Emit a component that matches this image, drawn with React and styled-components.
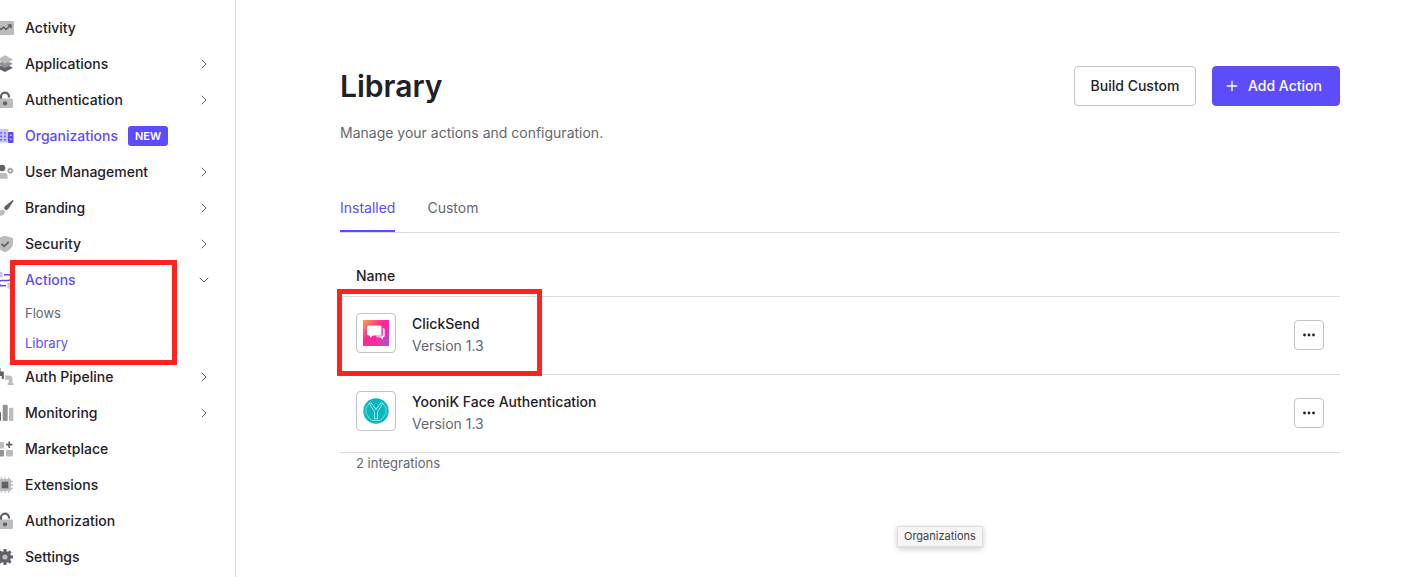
import React from "react";
import styled, { createGlobalStyle, css } from "styled-components";
import { ChevronRight, ChevronDown, Plus } from "lucide-react";

const c = {
  ink: "#1e212a",
  muted: "#65676e",
  brand: "#5c4cfa",
  brandLight: "#c8c2fd",
  line: "#dcdcdd",
  edge: "#c4c4c8",
  dark: "#5f6068",
  mid: "#8f9596",
  light: "#bcbcbd",
  mark: "#ff231f",
};

const GlobalStyle = createGlobalStyle`
  *, *::before, *::after { box-sizing: border-box; }
  body {
    margin: 0;
    background: #fff;
    color: ${c.ink};
    font-family: Inter, "Liberation Sans", sans-serif;
    font-size: 14px;
    line-height: 22px;
  }
  button { font: inherit; color: inherit; cursor: pointer; }
  a { color: inherit; text-decoration: none; }
`;

const Page = styled.div`
  position: relative;
  display: flex;
  min-height: 100vh;
`;

const Sidebar = styled.nav`
  flex: 0 0 236px;
  padding-top: 10px;
  border-right: 1px solid ${c.line};
`;

const NavList = styled.ul`
  list-style: none;
  margin: 0;
  padding: 0;
`;

const NavItem = styled.li`
  position: relative;
`;

const NavLink = styled.a`
  display: flex;
  align-items: center;
  height: 36px;
  padding-right: 23px;
  font-weight: 500;
  color: ${(p) => (p.$active ? c.brand : c.ink)};
`;

const NavIcon = styled.svg`
  flex: none;
  width: 15px;
  height: 20px;
  margin-right: 10px;
`;

const Chevron = styled.span`
  display: flex;
  margin-left: auto;
  color: ${c.dark};
`;

const Badge = styled.span`
  margin-left: 10px;
  padding: 0 7px;
  border-radius: 3px;
  background: ${c.brand};
  color: #fff;
  font-size: 11px;
  font-weight: 600;
  line-height: 20px;
`;

const SubList = styled(NavList)`
  padding-bottom: 1px;
`;

const SubLink = styled.a`
  display: block;
  padding-left: 25px;
  font-size: 13px;
  line-height: 30px;
  color: ${(p) => (p.$active ? c.brand : c.muted)};
`;

const markBase = css`
  position: absolute;
  border: 5px solid ${c.mark};
  pointer-events: none;
`;

const MenuMark = styled.span`
  ${markBase}
  left: 10px;
  top: -2px;
  width: 167px;
  height: 105px;
`;

const RowMark = styled.span`
  ${markBase}
  left: -3px;
  top: -8px;
  width: 205px;
  height: 87px;
`;

const Main = styled.main`
  flex: 1;
  min-width: 0;
  padding: 66px 62px 0 104px;
`;

const Header = styled.header`
  display: flex;
  align-items: center;
  gap: 16px;
`;

const Title = styled.h1`
  flex: 1;
  margin: 0;
  font-size: 30px;
  font-weight: 600;
  line-height: 40px;
`;

const Button = styled.button`
  display: flex;
  align-items: center;
  justify-content: ${(p) => (p.$primary ? "flex-start" : "center")};
  gap: 8px;
  height: 40px;
  min-width: ${(p) => (p.$primary ? "128px" : "122px")};
  padding: 0 11px;
  border: 1px solid ${(p) => (p.$primary ? c.brand : c.edge)};
  border-radius: 4px;
  background: ${(p) => (p.$primary ? c.brand : "#fff")};
  color: ${(p) => (p.$primary ? "#fff" : c.ink)};
  font-weight: 500;
`;

const Lead = styled.p`
  margin: 16px 0 0;
  color: ${c.muted};
`;

const Tabs = styled.div`
  display: flex;
  gap: 32px;
  margin-top: 53px;
  border-bottom: 1px solid ${c.line};
`;

const Tab = styled.button`
  padding: 0 0 11px;
  border: 0;
  border-bottom: 2px solid ${(p) => (p.$active ? c.brand : "transparent")};
  background: none;
  color: ${(p) => (p.$active ? c.brand : c.muted)};
`;

const Table = styled.table`
  width: 100%;
  margin-top: 22px;
  border-collapse: separate;
  border-spacing: 0;
`;

const HeadCell = styled.th`
  height: 42px;
  padding: 0 16px;
  border-bottom: 1px solid ${c.line};
  font-weight: 500;
  text-align: left;
`;

const Cell = styled.td`
  position: relative;
  height: 78px;
  padding: 0 16px 1px;
  border-bottom: 1px solid ${c.line};
`;

const ActionCell = styled(Cell)`
  width: 62px;
`;

const Integration = styled.div`
  display: flex;
  gap: 16px;
`;

const LogoTile = styled.span`
  display: flex;
  align-items: center;
  justify-content: center;
  width: 40px;
  height: 40px;
  border: 1px solid ${c.edge};
  border-radius: 4px;
`;

const Name = styled.div`
  font-weight: 500;
`;

const Version = styled.div`
  color: ${c.muted};
`;

const MoreButton = styled.button`
  display: flex;
  align-items: center;
  justify-content: center;
  width: 30px;
  height: 30px;
  padding: 0;
  border: 1px solid ${c.edge};
  border-radius: 4px;
  background: #fff;
`;

const Count = styled.p`
  margin: 0;
  padding-left: 16px;
  font-size: 13px;
  line-height: 20px;
  color: ${c.muted};
`;

const Tooltip = styled.div`
  position: absolute;
  left: 897px;
  top: 526px;
  padding: 0 6px;
  border: 1px solid #dedede;
  background: #f5f5f5;
  box-shadow: 0 2px 6px rgba(0, 0, 0, 0.2);
  color: #444;
  font-size: 11px;
  line-height: 19px;
`;

const lock = (
  <>
    <path d="M1 9V6.800a4 4 0 0 1 8-.3V7.500" fill="none" stroke={c.dark} strokeWidth="2.200" />
    <rect x="-3" y="8.500" width="16" height="9.500" rx="1.500" fill={c.light} />
    <circle cx="5" cy="13.300" r="2.100" fill={c.dark} />
  </>
);

const icons = {
  activity: (
    <>
      <rect x="-4" y="3" width="18" height="14" rx="1.5" fill={c.light} />
      <path d="M-1 9.5 1 11.5 3.5 9 6 11.5 10.5 7.5M7.8 7h3.2v3.2" fill="none" stroke={c.dark} strokeWidth="1.5" />
    </>
  ),
  layers: (
    <>
      <path d="M-3 13.8 5 10l8 3.8L5 18z" fill={c.dark} />
      <path d="M-3 9.8 5 6l8 3.8L5 14z" fill={c.mid} />
      <path d="M-3 5.5 5 1.3l8 4.2L5 9.7z" fill={c.light} />
    </>
  ),
  lock,
  org: (
    <>
      <rect x="-4" y="3" width="12.5" height="13.5" rx="1" fill={c.brandLight} />
      <path d="M.3 6.2h1.6v1.6H.3zM4 6.2h1.6v1.6H4zM.3 9.6h1.6v1.6H.3zM4 9.6h1.6v1.6H4zM.3 13h1.6v1.6H.3zM4 13h1.6v1.6H4z" fill={c.brand} />
      <rect x="8" y="6" width="5.5" height="11" rx="1" fill={c.brand} />
      <path d="M10 8.5h1.5V10H10zM10 12.5h1.5V14H10z" fill={c.brandLight} />
    </>
  ),
  users: (
    <>
      <circle cx="2" cy="6" r="3.3" fill={c.dark} />
      <path d="M-5 16.7V14q0-3 3-3h6.500q3 0 3 3v2.700z" fill={c.light} />
      <circle cx="10.3" cy="8.800" r="1.800" fill="none" stroke={c.mid} strokeWidth="1.300" />
      <circle cx="10.3" cy="8.800" r="2.700" fill="none" stroke={c.mid} strokeWidth="1" strokeDasharray="1.060 1.060" />
    </>
  ),
  brush: (
    <>
      <path d="M12.300 2.200q1.500-.7 1 1L8.600 10.500q-1.300 1.700-2.600 1.800L4 10.400q0-1.300 1.300-2.500z" fill={c.dark} />
      <path d="M2.700 11.500q2.300.3 2.300 2.500-.4 3.800-5 3.800H-4v-1q2 0 3-2 1.200-3 3.700-3.300z" fill={c.light} />
    </>
  ),
  shield: (
    <>
      <path d="m5 1.700 8 2.600v5q0 6-8 8.900-8-2.900-8-8.900v-5z" fill={c.light} />
      <path d="m1.500 9.800 2.600 2.500L8.700 7.800" fill="none" stroke={c.dark} strokeWidth="1.800" />
    </>
  ),
  actions: (
    <>
      <rect x="-3" y="2" width="5.500" height="5.500" fill={c.brandLight} />
      <rect x="7.500" y="13" width="5.500" height="5.500" fill={c.brandLight} />
      <path d="M4 4.700h4.500q2.500 0 2.500 2.900T8.500 10.500H1.500Q-1 10.500-1 13.100t2.500 2.600H6" fill="none" stroke={c.brand} strokeWidth="1.600" />
    </>
  ),
  pipeline: (
    <>
      <path d="M-3 1h3.500v3.500h3.300V12H1.800V9H-3z" fill={c.dark} />
      <path d="M5.200 8.500H9q3.500 0 3.500 3.500v4h1v2H7.700v-2h1v-3.300H5.200z" fill={c.light} />
    </>
  ),
  bars: (
    <>
      <rect x="-3" y="9" width="4" height="9" rx="1" fill={c.dark} />
      <rect x="2.700" y="1.700" width="5" height="16.300" rx="1" fill={c.mid} />
      <rect x="9" y="4.700" width="4.300" height="13.300" rx="1" fill={c.light} />
    </>
  ),
  market: (
    <>
      <rect x="-3" y="3" width="7" height="6.500" rx="1" fill={c.light} />
      <rect x="-3" y="11" width="7" height="6.500" rx="1" fill={c.mid} />
      <rect x="6" y="11" width="7" height="6.500" rx="1" fill={c.light} />
      <path d="M9.200 2.500v6.400M6 5.700h6.400" stroke={c.dark} strokeWidth="1.700" />
    </>
  ),
  chip: (
    <>
      <path d="M1.500 2.300v15.400M5 2.300v15.400M8.500 2.300v15.400M-3 6.500h16M-3 10h16M-3 13.500h16" stroke={c.light} strokeWidth="1.300" />
      <rect x="-1" y="4" width="12" height="12" rx="1" fill={c.light} />
      <rect x="1.700" y="6.700" width="6.600" height="6.600" fill={c.dark} />
    </>
  ),
  gear: (
    <>
      <circle cx="5" cy="10" r="6" fill={c.dark} />
      <path d="M5 2v16M-3 10h16M-.6 4.400l11.200 11.200M10.600 4.400-.6 15.600" stroke={c.dark} strokeWidth="3" />
      <circle cx="5" cy="10" r="2.600" fill={c.light} />
    </>
  ),
};

const nav = [
  { label: "Activity", icon: "activity" },
  { label: "Applications", icon: "layers", more: true },
  { label: "Authentication", icon: "lock", more: true },
  { label: "Organizations", icon: "org", active: true, badge: "NEW" },
  { label: "User Management", icon: "users", more: true },
  { label: "Branding", icon: "brush", more: true },
  { label: "Security", icon: "shield", more: true },
  {
    label: "Actions",
    icon: "actions",
    active: true,
    children: [{ label: "Flows" }, { label: "Library", active: true }],
  },
  { label: "Auth Pipeline", icon: "pipeline", more: true },
  { label: "Monitoring", icon: "bars", more: true },
  { label: "Marketplace", icon: "market" },
  { label: "Extensions", icon: "chip" },
  { label: "Authorization", icon: "lock" },
  { label: "Settings", icon: "gear" },
];

const ClickSendLogo = () => (
  <svg width="26" height="26" viewBox="0 0 26 26" aria-hidden="true">
    <defs>
      <linearGradient id="clicksend" x1="0" y1="0" x2="1" y2="1">
        <stop offset="0" stopColor="#ffa64d" />
        <stop offset="0.4" stopColor="#ff2a92" />
        <stop offset="0.7" stopColor="#f52da6" />
        <stop offset="1" stopColor="#9a55e0" />
      </linearGradient>
    </defs>
    <path d="M0 0h26v26H0z" fill="url(#clicksend)" />
    <path d="M20 8q1.700 0 1.700 1.500v6.300q0 1.400-1.500 1.400H20v2.300l-3.200-2.300h-3.300v-2h6.500z" fill="#fff" />
    <path d="M5.500 5.500h11.500q1.500 0 1.500 1.500v7q0 1.500-1.500 1.500H10l-3 2.300v-2.300H5.500Q4 15.500 4 14V7q0-1.500 1.500-1.500z" fill="#fff" />
    <path d="M19.200 7v7.200q0 1.800-1.800 1.900h-4" fill="none" stroke="#ff5cae" strokeWidth="0.9" />
  </svg>
);

const YoonikLogo = () => (
  <svg width="26" height="26" viewBox="0 0 26 26" aria-hidden="true">
    <circle cx="13" cy="13" r="12.700" fill="#0cb7bd" />
    <g fill="none" stroke="#a6e8e9" strokeWidth="0.9">
      <path d="M7.500 3.500 3 10v6l5.500 6.500h9L23 16v-6l-4.500-6.500" opacity="0.8" />
      <path d="M6.300 5.500 11.500 13.800V21h3v-7.200L19.700 5.500h-2.500L13 11.700 8.800 5.500z" />
    </g>
  </svg>
);

const integrations = [
  { name: "ClickSend", version: "Version 1.3", Logo: ClickSendLogo, marked: true },
  { name: "YooniK Face Authentication", version: "Version 1.3", Logo: YoonikLogo },
];

export default function App() {
  return (
    <>
      <GlobalStyle />
      <Page>
        <Sidebar>
          <NavList>
            {nav.map((item) => (
              <NavItem key={item.label}>
                <NavLink href="#" $active={item.active}>
                  <NavIcon viewBox="0 0 15 20" aria-hidden="true">{icons[item.icon]}</NavIcon>
                  {item.label}
                  {item.badge && <Badge>{item.badge}</Badge>}
                  {item.more && <Chevron><ChevronRight size={16} strokeWidth={1.5} /></Chevron>}
                  {item.children && <Chevron><ChevronDown size={16} strokeWidth={1.5} /></Chevron>}
                </NavLink>
                {item.children && (
                  <>
                    <SubList>
                      {item.children.map((child) => (
                        <li key={child.label}>
                          <SubLink href="#" $active={child.active}>{child.label}</SubLink>
                        </li>
                      ))}
                    </SubList>
                    <MenuMark />
                  </>
                )}
              </NavItem>
            ))}
          </NavList>
        </Sidebar>
        <Main>
          <Header>
            <Title>Library</Title>
            <Button type="button">Build Custom</Button>
            <Button type="button" $primary>
              <Plus size={16} strokeWidth={2} />
              Add Action
            </Button>
          </Header>
          <Lead>Manage your actions and configuration.</Lead>
          <Tabs role="tablist">
            <Tab type="button" role="tab" aria-selected="true" $active>Installed</Tab>
            <Tab type="button" role="tab" aria-selected="false">Custom</Tab>
          </Tabs>
          <Table>
            <thead>
              <tr>
                <HeadCell scope="col">Name</HeadCell>
                <HeadCell as="td" />
              </tr>
            </thead>
            <tbody>
              {integrations.map(({ name, version, Logo, marked }) => (
                <tr key={name}>
                  <Cell>
                    <Integration>
                      <LogoTile><Logo /></LogoTile>
                      <div>
                        <Name>{name}</Name>
                        <Version>{version}</Version>
                      </div>
                    </Integration>
                    {marked && <RowMark />}
                  </Cell>
                  <ActionCell>
                    <MoreButton type="button" aria-label="More options">
                      <svg width="14" height="4" viewBox="0 0 14 4" fill={c.ink} aria-hidden="true">
                        <circle cx="2.500" cy="2" r="1.400" />
                        <circle cx="7" cy="2" r="1.400" />
                        <circle cx="11.500" cy="2" r="1.400" />
                      </svg>
                    </MoreButton>
                  </ActionCell>
                </tr>
              ))}
            </tbody>
          </Table>
          <Count>2 integrations</Count>
        </Main>
        <Tooltip role="tooltip">Organizations</Tooltip>
      </Page>
    </>
  );
}
